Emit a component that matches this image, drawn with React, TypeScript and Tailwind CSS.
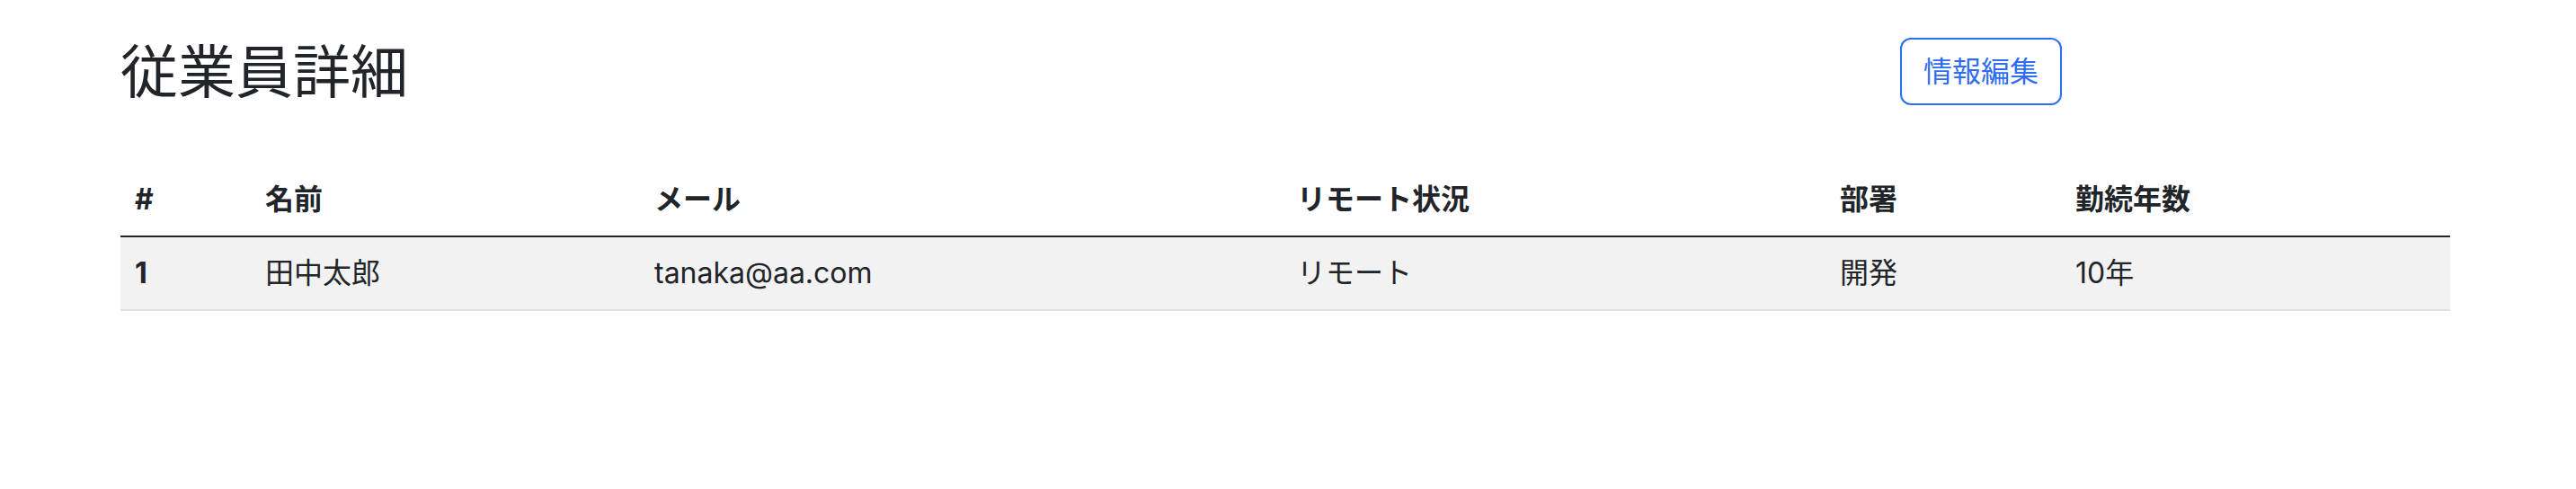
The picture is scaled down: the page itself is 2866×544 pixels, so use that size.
import React from 'react'

const columns = [
  { key: 'id', label: '#', width: 'w-[145px]' },
  { key: 'name', label: '名前', width: 'w-[433px]' },
  { key: 'email', label: 'メール', width: 'w-[715px]' },
  { key: 'remote', label: 'リモート状況', width: 'w-[604px]' },
  { key: 'dept', label: '部署', width: 'w-[262px]' },
  { key: 'years', label: '勤続年数', width: 'w-[433px]' },
]

const employee = {
  id: '1',
  name: '田中太郎',
  email: 'tanaka@aa.com',
  remote: 'リモート',
  dept: '開発',
  years: '10年',
}

export default function App() {
  return (
    <div className="min-h-[544px] w-[2866px] bg-white text-[#212529] font-['Inter','Noto_Sans_CJK_JP',sans-serif]">
      <div className="ml-[134px] w-[2592px] pt-[42px]">
        {/* Header */}
        <div className="flex h-[75px] items-center">
          <h2 className="w-[1980px] text-[64px] leading-[77px] font-normal">従業員詳細</h2>
          <button className="h-[75px] w-[180px] rounded-[12px] border-2 border-[#2f6df0] bg-white text-[32px] leading-[48px] text-[#2f6df0]">
            情報編集
          </button>
        </div>

        {/* Employee table */}
        <table className="mt-[65px] w-full table-fixed border-separate border-spacing-0 text-[32px] leading-[48px]">
          <thead>
            <tr>
              {columns.map((c) => (
                <th key={c.key} className={`${c.width} px-[16px] py-[16px] text-left font-bold`}>
                  {c.label}
                </th>
              ))}
            </tr>
          </thead>
          <tbody>
            <tr className="bg-[#f2f2f2]">
              {columns.map((c) => (
                <td
                  key={c.key}
                  className={`border-t-2 border-b-2 border-t-[#212529] border-b-[#dee2e6] px-[16px] py-[16px] ${c.key === 'id' ? 'font-bold' : 'font-normal'}`}
                >
                  {employee[c.key as keyof typeof employee]}
                </td>
              ))}
            </tr>
          </tbody>
        </table>
      </div>
    </div>
  )
}
